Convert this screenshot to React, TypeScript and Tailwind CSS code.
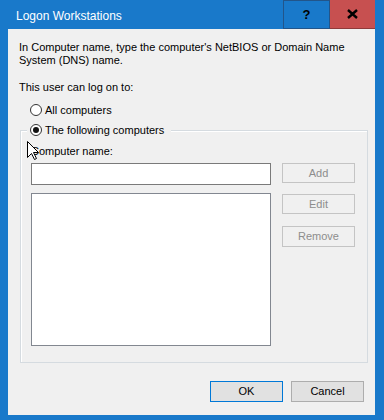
import React from "react";

const font = { fontFamily: '"Liberation Sans", Arial, sans-serif' };

function Radio({ checked }: { checked?: boolean }) {
  return (
    <span className="w-[12px] h-[12px] rounded-full border border-[#333333] bg-white flex items-center justify-center shrink-0">
      {checked && <span className="w-[6px] h-[6px] rounded-full bg-[#111111]" />}
    </span>
  );
}

function DisabledBtn({ label, className = "" }: { label: string; className?: string }) {
  return (
    <div
      className={`w-[73px] border border-[#c4c4c4] bg-[#f0f0f0] text-[#8d8d8d] flex items-center justify-center text-[11px] ${className}`}
    >
      {label}
    </div>
  );
}

export default function App() {
  return (
    <div className="relative w-[384px] h-[420px] bg-[#1979ca] overflow-hidden" style={font}>
      {/* Title bar */}
      <div className="h-[29px] flex">
        <div className="flex-1 pl-[16px] pt-[9px] text-[12px] leading-[14px] text-white">
          Logon Workstations
        </div>
        <div className="w-[47px] h-[29px] border border-[#22558a] flex items-center justify-center text-[13px] font-bold text-black">
          ?
        </div>
        <div className="w-[45px] h-[29px] bg-[#c75050] border-b border-[#8f3a3a] flex items-center justify-center">
          <svg width="11" height="10" viewBox="0 0 11 10">
            <path d="M1 1 L10 9 M10 1 L1 9" stroke="#000" strokeWidth="2.4" />
          </svg>
        </div>
        <div className="w-[9px]" />
      </div>

      {/* Content */}
      <div className="ml-[8px] w-[367px] h-[386px] bg-[#f0f0f0] flex flex-col pl-[11px] pt-[12px] text-[11px] leading-[13px] text-black">
        <p>
          In Computer name, type the computer's NetBIOS or Domain Name
          <br />
          System (DNS) name.
        </p>
        <div className="mt-[14px]">This user can log on to:</div>
        <div className="mt-[9px] ml-[11px] h-[14px] flex items-center gap-[3px]">
          <Radio />
          <span>All computers</span>
        </div>

        {/* Group box */}
        <div className="relative mt-[13px] ml-[1px] w-[348px] h-[233px] border border-[#d5dbe0] shadow-[inset_1px_1px_0_#ffffff] flex flex-col pl-[10px] pt-[14px]">
          <div className="absolute left-[6px] top-[-8px] h-[14px] bg-[#f0f0f0] pl-[3px] pr-[7px] flex items-center gap-[3px]">
            <Radio checked />
            <span>The following computers</span>
          </div>
          <div>Computer name:</div>
          <div className="mt-[5px] flex items-start">
            <div className="w-[240px] h-[22px] bg-white border border-[#7a7a7a]" />
            <DisabledBtn label="Add" className="ml-[11px] h-[20px]" />
          </div>
          <div className="mt-[8px] flex items-start">
            <div className="w-[240px] h-[153px] bg-white border border-[#828790]" />
            <div className="ml-[11px] pt-[1px] flex flex-col">
              <DisabledBtn label="Edit" className="h-[20px]" />
              <DisabledBtn label="Remove" className="mt-[12px] h-[21px]" />
            </div>
          </div>
        </div>

        <div className="mt-[18px] pr-[11px] flex justify-end gap-[8px]">
          <div className="w-[73px] h-[21px] border border-[#0078d7] bg-[#e1e1e1] flex items-center justify-center">
            OK
          </div>
          <div className="w-[73px] h-[21px] border border-[#adadad] bg-[#e1e1e1] flex items-center justify-center">
            Cancel
          </div>
        </div>
      </div>

      {/* Mouse cursor */}
      <svg className="absolute left-[27px] top-[141px]" width="13" height="20" viewBox="0 0 13 20">
        <path
          d="M0.5 0.5 L0.5 16.5 L4.5 12.5 L7.5 18.5 L9.5 17.5 L6.5 11.5 L11.5 11.5 Z"
          fill="#ffffff"
          stroke="#000000"
          strokeWidth="1"
        />
      </svg>
    </div>
  );
}
